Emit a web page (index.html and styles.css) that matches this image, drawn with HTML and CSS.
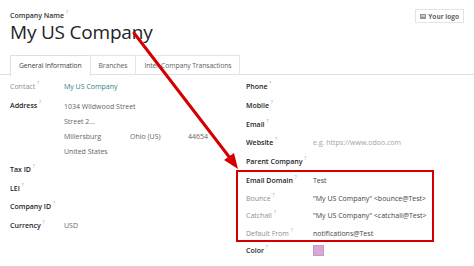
FILE: index.html
```html
<!DOCTYPE html>
<html>
<head>
<meta charset="utf-8">
<link rel="stylesheet" href="styles.css">
</head>
<body>
<div class="page">
  <div class="header">
    <div class="title-block">
      <div class="small-label">Company Name <sup>?</sup></div>
      <div class="title">My US Company</div>
    </div>
    <div class="logo-btn"><svg class="logo-icon" viewBox="0 0 10 8" width="6" height="5"><rect x="0" y="0" width="10" height="8" fill="#888"/><rect x="1.5" y="1.5" width="7" height="5" fill="#ccc"/><path d="M1.5 6.5 L4 3.5 L6 5.5 L7 4.5 L8.5 6.5Z" fill="#888"/></svg>Your logo</div>
  </div>
  <div class="tabs">
    <div class="tab active">General Information</div>
    <div class="tab">Branches</div>
    <div class="tab">Inter-Company Transactions</div>
  </div>
  <div class="content">
    <div class="col left">
      <div class="row"><div class="lbl muted">Contact <sup>?</sup></div><div class="val link">My US Company</div></div>
      <div class="row addr"><div class="lbl">Address <sup>?</sup></div>
        <div class="val address">
          <div>1034 Wildwood Street</div>
          <div>Street 2...</div>
          <div class="cityline"><span class="city">Millersburg</span><span class="state">Ohio (US)</span><span class="zip">44654</span></div>
          <div>United States</div>
        </div>
      </div>
      <div class="row"><div class="lbl">Tax ID <sup>?</sup></div><div class="val"></div></div>
      <div class="row"><div class="lbl">LEI <sup>?</sup></div><div class="val"></div></div>
      <div class="row"><div class="lbl">Company ID <sup>?</sup></div><div class="val"></div></div>
      <div class="row"><div class="lbl">Currency <sup>?</sup></div><div class="val">USD</div></div>
    </div>
    <div class="col right">
      <div class="row"><div class="lbl">Phone <sup>?</sup></div><div class="val"></div></div>
      <div class="row"><div class="lbl">Mobile <sup>?</sup></div><div class="val"></div></div>
      <div class="row"><div class="lbl">Email <sup>?</sup></div><div class="val"></div></div>
      <div class="row"><div class="lbl">Website <sup>?</sup></div><div class="val placeholder">e.g. https://www.odoo.com</div></div>
      <div class="row"><div class="lbl">Parent Company <sup>?</sup></div><div class="val"></div></div>
      <div class="row tight"><div class="lbl">Email Domain <sup>?</sup></div><div class="val dark">Test</div></div>
      <div class="row tight"><div class="lbl muted">Bounce <sup>?</sup></div><div class="val dark">"My US Company" &lt;bounce@Test&gt;</div></div>
      <div class="row tight"><div class="lbl muted">Catchall <sup>?</sup></div><div class="val dark">"My US Company" &lt;catchall@Test&gt;</div></div>
      <div class="row tight"><div class="lbl muted">Default From <sup>?</sup></div><div class="val dark">notifications@Test</div></div>
      <div class="row tight"><div class="lbl">Color <sup>?</sup></div><div class="val"><span class="swatch"></span></div></div>
    </div>
  </div>
  <div class="highlight"></div>
  <svg class="arrow" width="474" height="266" viewBox="0 0 474 266">
    <line x1="134" y1="33" x2="230" y2="158" stroke="#d40000" stroke-width="3" stroke-linecap="round"/>
    <polygon points="238,169 224,160 234,153" fill="#d40000"/>
  </svg>
</div>
</body>
</html>
```

FILE: styles.css
```css
* { box-sizing: border-box; }
html, body { margin: 0; padding: 0; background: #fff; }
body {
  font-family: "Open Sans", "Noto Sans", sans-serif;
  font-size: 7px;
  color: #212529;
  width: 474px;
  height: 266px;
  overflow: hidden;
}
.page { position: relative; width: 474px; height: 266px; }
sup { font-size: 4.5px; color: #9aa0a6; font-weight: normal; vertical-align: 4px; line-height: 0; }
.header {
  display: flex;
  justify-content: space-between;
  align-items: flex-start;
  padding: 10px 10px 0 10px;
}
.small-label { font-size: 7px; font-weight: 600; color: #333; line-height: 11px; }
.title { font-size: 19px; line-height: 24px; color: #212529; margin-top: -1px; letter-spacing: -0.2px; }
.logo-btn {
  margin-top: -1px;
  margin-right: 0;
  border: 1px solid #e4e4e4;
  padding: 2px 4px;
  font-size: 6.5px;
  font-weight: 700;
  color: #666;
  display: flex;
  align-items: center;
  gap: 2px;
  height: 14px;
}
.tabs {
  display: flex;
  margin-top: 11px;
  padding-left: 10px;
  border-bottom: 1px solid #dee2e6;
  height: 20px;
}
.tab {
  padding: 0 8px;
  line-height: 19px;
  color: #5f6368;
  font-size: 6.8px;
  border: 1px solid #e3e6e9;
  border-bottom: none;
  margin-right: -1px;
  height: 20px;
  letter-spacing: -0.1px;
}
.tab.active { color: #444; border-color: #dcdfe3; background: #fff; height: 21px; }
.content {
  display: grid;
  grid-template-columns: 236px 228px;
  gap: 0;
  padding: 3px 0 0 10px;
}
.col { display: flex; flex-direction: column; }
.right { padding-left: 0; }
.row { display: flex; min-height: 18.8px; align-items: flex-start; line-height: 18.8px; }
.row.tight { min-height: 17.6px; line-height: 17.6px; }
.left .lbl { width: 54px; flex: none; }
.right .lbl { width: 67px; flex: none; }
.lbl { font-weight: 600; color: #212529; white-space: nowrap; }
.lbl.muted { font-weight: normal; color: #8a8f94; }
.val { color: #666; white-space: nowrap; }
.val.dark { color: #444; }
.val.link { color: #2f7f86; }
.val.placeholder { color: #a0a4a8; }
.address { line-height: 15px; padding-top: 2px; }
.addr { margin-bottom: 2px; }
.cityline { display: flex; }
.city { width: 66px; }
.state { width: 58px; }
.swatch { display: inline-block; width: 11px; height: 11px; background: #d7a9d3; border: 1px solid #c89bc4; vertical-align: middle; margin-top: -2px; }
.highlight {
  position: absolute;
  left: 236px;
  top: 170px;
  width: 198px;
  height: 72px;
  border: 2.5px solid #d40000;
  pointer-events: none;
}
.arrow { position: absolute; left: 0; top: 0; pointer-events: none; }
```
